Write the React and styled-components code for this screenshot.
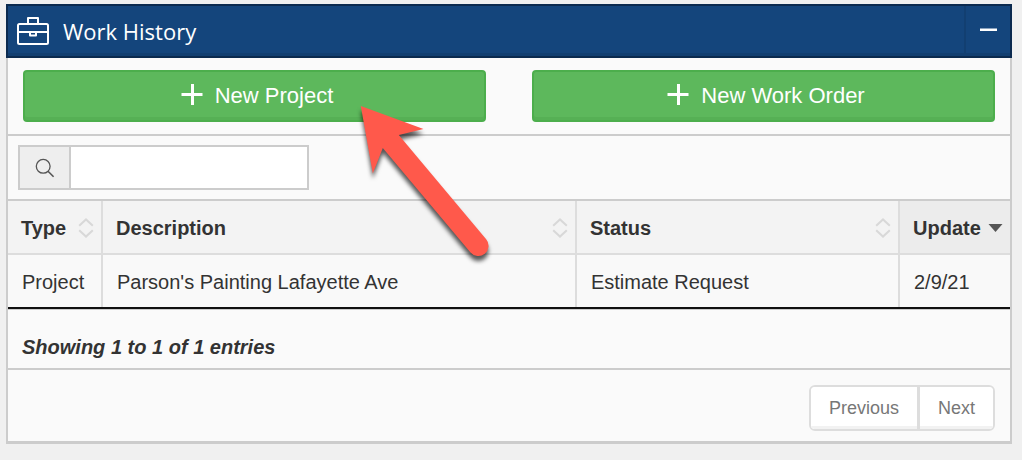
import React, { useState } from "react";
import styled, { createGlobalStyle } from "styled-components";

const columns = [
  { key: "type", label: "Type", width: "95px" },
  { key: "description", label: "Description", width: "47.3%" },
  { key: "status", label: "Status", width: "auto" },
  { key: "update", label: "Update", width: "110px", sorted: true },
];

const projects = [
  { type: "Project", description: "Parson's Painting Lafayette Ave", status: "Estimate Request", update: "2/9/21" },
];

const BriefcaseIcon = () => (
  <svg width="32" height="28" viewBox="0 0 32 28" fill="none" stroke="#fff" strokeWidth="2" strokeLinejoin="round">
    <rect x="1" y="7" width="30" height="20" rx="1.5" />
    <path d="M11 7V1h10v6M1 15h30M13 15v3.5h6V15" />
  </svg>
);

const PlusIcon = () => (
  <svg width="22" height="24" viewBox="0 0 22 24" fill="none" stroke="#fff" strokeWidth="3">
    <path d="M11.5 0v21M0.5 10.5h21" />
  </svg>
);

const SearchIcon = () => (
  <svg width="20" height="20" viewBox="0 0 20 20" fill="none" stroke="#555" strokeWidth="1.3">
    <circle cx="8.2" cy="8.3" r="6.9" />
    <path d="M13 13.2l5.6 5.5" strokeWidth="1.6" />
  </svg>
);

const SortIcon = () => (
  <svg width="16" height="20" viewBox="0 0 16 20" fill="none" stroke="#d8d8d8" strokeWidth="2">
    <path d="M1.2 7.8L8 1.4l6.8 6.4M1.2 12.2L8 18.6l6.8-6.4" />
  </svg>
);

const SortDownIcon = () => (
  <svg width="15" height="8" viewBox="0 0 15 8">
    <path d="M0.5 0h14L7.5 8z" fill="#555" />
  </svg>
);

const App = () => {
  const [open, setOpen] = useState(true);
  const [search, setSearch] = useState("");

  const rows = projects.filter((el) =>
    Object.values(el).join(" ").toLowerCase().includes(search.toLowerCase())
  );

  return (
    <Page>
      <GlobalStyle />
      <Panel>
        <PanelHeader>
          <BriefcaseIcon />
          <PanelTitle>Work History</PanelTitle>
          <CollapseButton aria-label="Collapse" aria-expanded={open} onClick={() => setOpen(!open)}>
            <svg width="17" height="3" viewBox="0 0 17 3">
              <rect y="0.5" width="17" height="2.5" fill="#fff" />
            </svg>
          </CollapseButton>
        </PanelHeader>
        {open && (
          <>
            <Actions>
              <ActionItem>
                <ActionButton>
                  <PlusIcon />
                  New Project
                </ActionButton>
                <Pointer width="144" height="170" viewBox="0 0 144 170" aria-hidden="true">
                  <path
                    d="M5.8 4L68.5 27L43.8 33L131.2 137.2A10.3 10.3 0 0 1 115.3 150.3L27.8 46L17.8 71.5Z"
                    fill="#ff594b"
                  />
                </Pointer>
              </ActionItem>
              <ActionItem>
                <ActionButton>
                  <PlusIcon />
                  New Work Order
                </ActionButton>
              </ActionItem>
            </Actions>
            <SearchRow>
              <SearchGroup>
                <SearchLabel htmlFor="search" aria-label="Search">
                  <SearchIcon />
                </SearchLabel>
                <SearchInput id="search" value={search} onChange={(e) => setSearch(e.target.value)} />
              </SearchGroup>
            </SearchRow>
            <TableWrapper>
              <Table>
                <thead>
                  <tr>
                    {columns.map((el) => (
                      <HeadCell key={el.key} $width={el.width} $sorted={el.sorted}>
                        <SortButton>
                          {el.label}
                          {el.sorted ? <SortDownIcon /> : <SortIcon />}
                        </SortButton>
                      </HeadCell>
                    ))}
                  </tr>
                </thead>
                <tbody>
                  {rows.map((row, id) => (
                    <tr key={id}>
                      {columns.map((el) => (
                        <Cell key={el.key}>{row[el.key]}</Cell>
                      ))}
                    </tr>
                  ))}
                </tbody>
              </Table>
            </TableWrapper>
            <Info>
              Showing {rows.length ? 1 : 0} to {rows.length} of {rows.length} entries
            </Info>
            <Footer>
              <Pagination aria-label="Pages">
                <PageButton>Previous</PageButton>
                <PageButton>Next</PageButton>
              </Pagination>
            </Footer>
          </>
        )}
      </Panel>
    </Page>
  );
};
export default App;

const GlobalStyle = createGlobalStyle`
  * {
    box-sizing: border-box;
  }
  body {
    margin: 0;
    background: #f0f0f0;
    color: #333;
    font-family: "Liberation Sans", Arial, sans-serif;
    font-size: 20px;
    line-height: 24px;
  }
  button, input {
    font-family: inherit;
  }
  svg {
    display: block;
    flex-shrink: 0;
  }
`;

const Page = styled.main`
  padding: 4px 10px 16px 6px;
`;

const Panel = styled.section`
  background: #fafafa;
`;

const PanelHeader = styled.header`
  display: flex;
  align-items: center;
  height: 54px;
  padding-left: 9px;
  border: 2px solid #0b2a4f;
  background: #14457c;
  box-shadow: inset 0 -3px 0 #123f71;
`;

const PanelTitle = styled.h2`
  flex: 1;
  margin: 0;
  padding-left: 14px;
  color: #fff;
  font-family: "Open Sans", sans-serif;
  font-size: 22px;
  font-weight: 400;
`;

const CollapseButton = styled.button`
  display: flex;
  align-items: center;
  justify-content: center;
  align-self: stretch;
  width: 46px;
  margin-bottom: 3px;
  padding: 0;
  border: 0;
  border-left: 2px solid #123f71;
  background: transparent;
  cursor: pointer;
`;

const Actions = styled.div`
  display: flex;
  gap: 46px;
  padding: 12px 15px;
  border: 2px solid #ccc;
  border-top: 0;
`;

const ActionItem = styled.div`
  position: relative;
  flex: 1;
`;

const ActionButton = styled.button`
  display: flex;
  align-items: center;
  justify-content: center;
  gap: 12px;
  width: 100%;
  height: 52px;
  padding: 0 0 0 5px;
  border: 2px solid #4cae4c;
  border-radius: 4px;
  background: #5db85c;
  box-shadow: inset 0 -3px 0 #56b055;
  color: #fff;
  font-size: 22px;
  cursor: pointer;
`;

/* sits over the rows below the button */
const Pointer = styled.svg`
  position: absolute;
  top: 32px;
  left: calc(50% + 100px);
  z-index: 1;
  overflow: visible;
  pointer-events: none;
  filter: drop-shadow(0 5px 2px rgba(0, 0, 0, 0.65));
`;

const SearchRow = styled.div`
  padding: 9px 10px;
  border: 2px solid #ccc;
  border-top: 0;
`;

const SearchGroup = styled.div`
  display: flex;
  width: 291px;
  max-width: 100%;
  height: 45px;
  border: 2px solid #ccc;
`;

const SearchLabel = styled.label`
  display: flex;
  align-items: center;
  justify-content: center;
  width: 51px;
  border-right: 2px solid #ccc;
  background: #eee;
`;

const SearchInput = styled.input`
  flex: 1;
  min-width: 0;
  padding: 0 12px;
  border: 0;
  outline: 0;
  background: #fff;
  color: #333;
  font-size: 20px;
`;

const TableWrapper = styled.div`
  border: solid #ccc;
  border-width: 0 2px;
`;

const Table = styled.table`
  width: 100%;
  table-layout: fixed;
  border-bottom: 2px solid #111;
  border-collapse: separate;
  border-spacing: 0;
`;

const HeadCell = styled.th`
  width: ${(props) => props.$width};
  padding: 0;
  border-right: 2px solid #ddd;
  border-bottom: 2px solid #ddd;
  background: ${(props) => (props.$sorted ? "#ececec" : "#f3f3f3")};

  &:last-child {
    border-right: 0;
  }
`;

const SortButton = styled.button`
  display: flex;
  align-items: center;
  justify-content: space-between;
  width: 100%;
  height: 52px;
  padding: 2px 7px 0 13px;
  border: 0;
  background: transparent;
  color: #333;
  font-size: 20px;
  font-weight: bold;
  cursor: pointer;
`;

const Cell = styled.td`
  padding: 15px 0 13px 14px;
  border-right: 2px solid #ddd;
  background: #f9f9f9;

  &:last-child {
    border-right: 0;
  }
`;

const Info = styled.div`
  padding: 25px 14px 9px;
  border: 2px solid #ccc;
  border-top: 1px solid #ccc;
  font-style: italic;
  font-weight: bold;
`;

const Footer = styled.footer`
  display: flex;
  justify-content: flex-end;
  padding: 15px 15px 10px;
  border: 2px solid #ccc;
  border-top: 0;
  border-bottom-width: 3px;
`;

const Pagination = styled.nav`
  display: flex;
  height: 46px;
  border: 2px solid #ddd;
  border-radius: 6px;
  overflow: hidden;
`;

const PageButton = styled.button`
  padding: 0 18px;
  border: 0;
  background: #fff;
  box-shadow: inset 0 -3px 0 #f2f2f2;
  color: #777;
  font-size: 18px;
  cursor: pointer;

  & + & {
    border-left: 3px solid #ddd;
  }
`;
